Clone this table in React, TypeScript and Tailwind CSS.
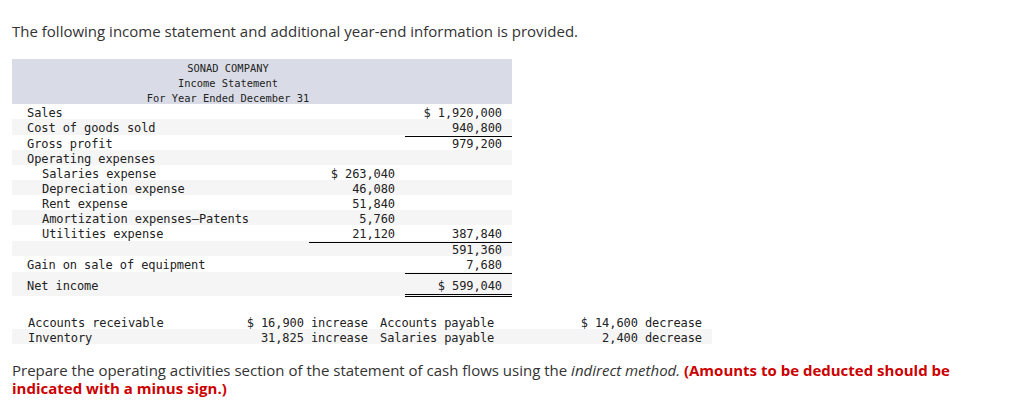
import React from "react";

const mono = {
  fontFamily: '"DejaVu Sans Mono", "Liberation Mono", monospace',
  letterSpacing: "-0.09px",
};

type Row = {
  label: string;
  indent?: boolean;
  c1?: string;
  c2?: string;
  gray?: boolean;
  c1Border?: boolean;
  c2Border?: boolean;
};

const rows: Row[] = [
  { label: "Sales", c2: "$ 1,920,000" },
  { label: "Cost of goods sold", c2: "940,800", gray: true, c2Border: true },
  { label: "Gross profit", c2: "979,200" },
  { label: "Operating expenses", gray: true },
  { label: "Salaries expense", indent: true, c1: "$ 263,040" },
  { label: "Depreciation expense", indent: true, c1: "46,080", gray: true },
  { label: "Rent expense", indent: true, c1: "51,840" },
  { label: "Amortization expenses\u2014Patents", indent: true, c1: "5,760", gray: true },
  { label: "Utilities expense", indent: true, c1: "21,120", c2: "387,840", c1Border: true, c2Border: true },
  { label: "", c2: "591,360", gray: true },
  { label: "Gain on sale of equipment", c2: "7,680", c2Border: true },
];

export default function App() {
  return (
    <div
      className="w-[1016px] h-[414px] bg-white pl-[12px] pt-[21px] overflow-hidden"
      style={{ fontFamily: '"Open Sans", "Noto Sans", sans-serif' }}
    >
      <p className="text-[15px] leading-[20px] text-[#333]">
        The following income statement and additional year-end information is provided.
      </p>

      <div className="mt-[18px] w-[500px] text-[12px] text-[#222]" style={mono}>
        <div className="bg-[#d9dce6] pr-[68px] pt-[2px] h-[45px] text-center text-[10.4px] tracking-normal leading-[15px]">
          <div>SONAD COMPANY</div>
          <div>Income Statement</div>
          <div>For Year Ended December 31</div>
        </div>
        {rows.map((r, i) => (
          <div
            key={i}
            className={`grid grid-cols-[297px_96px_107px] leading-[15px] ${
              r.c1Border || r.c2Border ? "h-[16px]" : "h-[15px]"
            } ${r.gray ? "bg-[#f5f5f5]" : "bg-white"}`}
          >
            <div className={`pt-[2px] ${r.indent ? "pl-[30px]" : "pl-[15px]"}`}>{r.label}</div>
            <div className={`pt-[2px] text-right pr-[10px] ${r.c1Border ? "border-b border-black" : ""}`}>
              {r.c1}
            </div>
            <div className={`pt-[2px] text-right pr-[10px] ${r.c2Border ? "border-b border-black" : ""}`}>
              {r.c2}
            </div>
          </div>
        ))}
        <div className="grid grid-cols-[297px_96px_107px] bg-[#f5f5f5] h-[24px]">
          <div className="pl-[15px] pt-[7px] leading-[15px]">Net income</div>
          <div></div>
          <div className="text-right pr-[10px] pt-[7px] leading-[15px] border-b-[3px] border-double border-black">
            $ 599,040
          </div>
        </div>
      </div>

      <div className="mt-[18px] w-[700px] text-[12px] text-[#222] leading-[15px]" style={mono}>
        <div className="grid grid-cols-[228px_132px_128px_212px] h-[15px] bg-white">
          <div className="pl-[16px] pt-[2px]">Accounts receivable</div>
          <div className="text-right pr-[4px] pt-[2px]">$ 16,900 increase</div>
          <div className="pl-[8px] pt-[2px]">Accounts payable</div>
          <div className="text-right pr-[10px] pt-[2px]">$ 14,600 decrease</div>
        </div>
        <div className="grid grid-cols-[228px_132px_128px_212px] h-[15px] bg-[#f5f5f5]">
          <div className="pl-[16px] pt-[2px]">Inventory</div>
          <div className="text-right pr-[4px] pt-[2px]">31,825 increase</div>
          <div className="pl-[8px] pt-[2px]">Salaries payable</div>
          <div className="text-right pr-[10px] pt-[2px]">2,400 decrease</div>
        </div>
      </div>

      <p className="mt-[17px] w-[950px] text-[15px] leading-[18px] text-[#333]">
        Prepare the operating activities section of the statement of cash flows using the{" "}
        <i>indirect method.</i>{" "}
        <b className="text-[#c00]">(Amounts to be deducted should be indicated with a minus sign.)</b>
      </p>
    </div>
  );
}
